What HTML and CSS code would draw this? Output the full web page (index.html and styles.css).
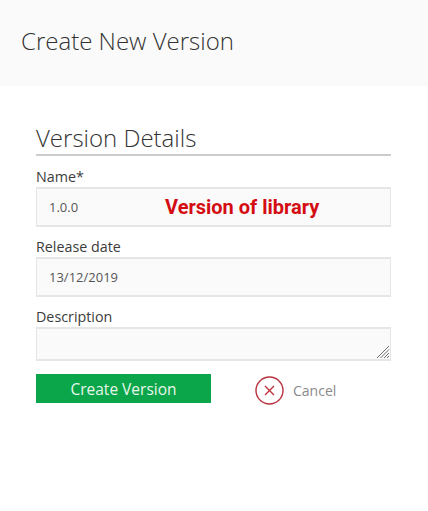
FILE: index.html
```html
<!DOCTYPE html>
<html lang="en">
<head>
<meta charset="utf-8">
<title>Create New Version</title>
<link rel="stylesheet" href="styles.css">
</head>
<body>
<header class="page-header"><h1 class="page-title">Create New Version</h1></header>
<main class="content">
  <h2 class="section-title">Version Details</h2>
  <form class="form">
    <label class="field-label">Name*</label>
    <div class="input">
      <span class="input-value">1.0.0</span>
      <span class="annotation">Version of library</span>
    </div>
    <label class="field-label">Release date</label>
    <div class="input"><span class="input-value">13/12/2019</span></div>
    <label class="field-label">Description</label>
    <div class="input textarea">
      <svg class="grip" width="14" height="14" viewBox="0 0 14 14" aria-hidden="true">
        <path d="M1 13 13 1M4.5 13 13 4.5M8 13 13 8M11 13 13 11" stroke="#6f6f6f" stroke-width="1" fill="none"/>
      </svg>
    </div>
    <div class="actions">
      <button class="primary" type="button">Create Version</button>
      <button class="cancel" type="button">
        <svg class="cancel-icon" width="29" height="29" viewBox="0 0 29 29" aria-hidden="true">
          <circle cx="14.5" cy="14.5" r="13.5" stroke="#b8323f" stroke-width="1.4" fill="none"/>
          <path d="M10 10 19 19M19 10 10 19" stroke="#c0303c" stroke-width="1.4" fill="none"/>
        </svg>
        <span>Cancel</span>
      </button>
    </div>
  </form>
</main>
</body>
</html>
```
FILE: styles.css
```css
* { box-sizing: border-box; }
html, body { margin: 0; padding: 0; background: #fff; }
body { font-family: "Open Sans", "Liberation Sans", sans-serif; color: #3c3c3c; width: 428px; height: 511px; overflow: hidden; }
.page-header { height: 86px; background: #fafafa; padding: 0 21px; display: flex; align-items: center; }
.page-title { margin: 0 0 4px; font-size: 24px; font-weight: 300; line-height: 32px; color: #333; }
.content { padding: 35px 37px 0 36px; }
.section-title { margin: 0; font-size: 24px; font-weight: 300; line-height: 33px; height: 35px; color: #333; border-bottom: 2px solid #ccc; }
.form { display: flex; flex-direction: column; }
.field-label { font-size: 14.3px; line-height: 22px; color: #3c3c3c; margin-top: 9px; height: 21px; }
.field-label:first-child { margin-top: 10px; }
.input { height: 40px; background: #fafafa; border: 1px solid #e6e6e6; border-width: 2px 1px; padding: 0 12px; display: flex; align-items: center; position: relative; }
.input-value { font-size: 13px; color: #555; }
.annotation { position: absolute; left: 128px; top: 50%; transform: translateY(-50%); font-family: Roboto, "Liberation Sans", sans-serif; font-weight: 700; font-size: 20px; color: #d40d12; white-space: nowrap; }
.textarea { height: 34px; }
.grip { position: absolute; right: 0; bottom: 0; }
.actions { display: flex; align-items: flex-start; margin-top: 13px; }
.primary { width: 175px; height: 29px; border: 0; background: #0ca64a; color: #e8f6ec; font: 400 15.5px "Open Sans", sans-serif; padding: 0; }
.cancel { margin: 2px 0 0 44px; display: flex; align-items: center; gap: 9px; background: none; border: 0; padding: 0; font: 400 14px "Open Sans", sans-serif; color: #8a8a8a; }
.cancel-icon { display: block; }
```
